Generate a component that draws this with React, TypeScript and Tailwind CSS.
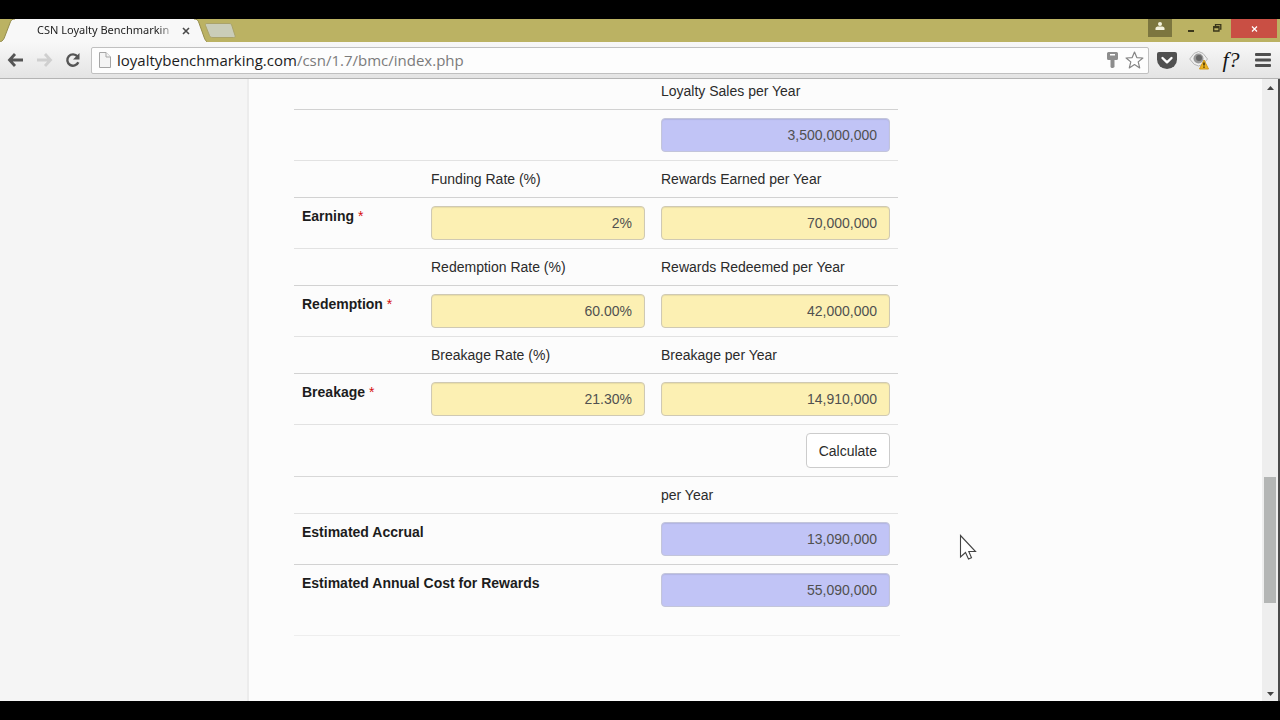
import React, { useState } from 'react';

type Tone = 'input' | 'result';

const TONE_CLS: Record<Tone, string> = {
  input: 'bg-[#fcf0b3] border-[#cfc9b4]',
  result: 'bg-[#c1c4f6] border-[#c3c5da]',
};

const RATE_ROWS = [
  { id: 'earning', label: 'Earning', rateLabel: 'Funding Rate (%)', yearLabel: 'Rewards Earned per Year', rate: '2%', year: '70,000,000' },
  { id: 'redemption', label: 'Redemption', rateLabel: 'Redemption Rate (%)', yearLabel: 'Rewards Redeemed per Year', rate: '60.00%', year: '42,000,000' },
  { id: 'breakage', label: 'Breakage', rateLabel: 'Breakage Rate (%)', yearLabel: 'Breakage per Year', rate: '21.30%', year: '14,910,000' },
];

function Field({ id, value, tone, label }: { id: string; value: string; tone: Tone; label?: string }) {
  const [text, setText] = useState(value);
  return (
    <input
      id={id}
      type="text"
      aria-label={label}
      value={text}
      readOnly={tone === 'result'}
      onChange={e => setText(e.target.value)}
      className={`block h-[34px] w-full rounded border px-3 text-right text-sm text-[#505050] shadow-[inset_0_1px_1px_rgba(0,0,0,0.08)] outline-none ${TONE_CLS[tone]}`}
    />
  );
}

function TabStrip() {
  return (
    <div className="flex h-[23px] shrink-0 items-start bg-[#bbb263]">
      <div className="relative h-[23px] w-[207px] shrink-0">
        <svg className="absolute inset-0 h-full w-full" viewBox="0 0 207 23" aria-hidden="true">
          <path d="M0 23 C3 22 4 20 5 17 L10 4 C11 1 12 0 15 0 H194 C197 0 198 1 199 4 L204 18 C205 21 206 22 207 23 Z" fill="#f8f8f8" />
          <path d="M0 23 C3 22 4 20 5 17 L10 4 C11 1 12 0 15 0 M194 0 C197 0 198 1 199 4 L204 18 C205 21 206 22 207 23" fill="none" stroke="#958d4d" />
        </svg>
        <div className="relative flex h-full items-center pl-[37px]">
          <span className="w-[138px] font-['Noto_Sans','Open_Sans',sans-serif] text-[11px] whitespace-nowrap text-[#222] [mask-image:linear-gradient(to_right,black_88%,transparent)]">
            CSN Loyalty Benchmarkin
          </span>
          <button aria-label="Close tab" className="ml-[5px] flex h-3 w-3 items-center justify-center">
            <svg width="8" height="8" viewBox="0 0 8 8" fill="none" stroke="#4a4a4a" strokeWidth="1.6">
              <path d="M1 1l6 6M7 1l-6 6" />
            </svg>
          </button>
        </div>
      </div>
      <button aria-label="New tab" className="-ml-0.5 pt-1">
        <svg width="31" height="15" viewBox="0 0 31 15">
          <path d="M2 .5 H24 C26 .5 26.5 1 27 3 L30 12.5 C30.5 14 30 14.5 28.5 14.5 H8 C6 14.5 5 14 4.5 12.5 L.5 2.5 C0 1 .5 .5 2 .5Z" fill="#cacdb9" stroke="#aaa36b" />
        </svg>
      </button>
      <div className="ml-auto flex items-start pr-[3px]">
        <button aria-label="Profile" className="flex h-[18px] w-6 justify-center bg-[#7c763f] pt-[3px]">
          <svg width="10" height="8" viewBox="0 0 10 8" fill="#f4f2df">
            <circle cx="5" cy="2" r="2" />
            <path d="M.5 8V6.500C.5 5 2 4.500 3.500 4.500h3C8 4.500 9.500 5 9.500 6.500V8z" />
          </svg>
        </button>
        <button aria-label="Minimize" className="flex h-[18px] w-8 items-center justify-center pl-1.5">
          <svg width="8" height="8" viewBox="0 0 8 8"><path d="M1 6h6v2H1z" fill="#3b371b" /></svg>
        </button>
        <button aria-label="Restore" className="flex h-[18px] w-[27px] items-center justify-center">
          <svg width="9" height="8" viewBox="0 0 9 8" fill="none" stroke="#3b371b" strokeWidth="1.3">
            <path d="M2.500 2V.7h5.300v4.500H6.500" />
            <path d="M.7 2.700h5.300v4.300H.7zM.7 3.500H6" />
          </svg>
        </button>
        <button aria-label="Close" className="flex h-[19px] w-[46px] items-center justify-center bg-[#c94f44]">
          <svg width="7" height="6" viewBox="0 0 7 6" fill="none" stroke="#fff" strokeWidth="1.200">
            <path d="M1 .5l5 5M6 .5l-5 5" />
          </svg>
        </button>
      </div>
    </div>
  );
}

function Toolbar() {
  return (
    <div className="flex h-[37px] shrink-0 items-center border-b border-[#b4b4b4] bg-linear-to-b from-[#f8f8f8] to-[#e4e4e4] pr-[9px] pl-[7px]">
      <button aria-label="Back">
        <svg width="17" height="14" viewBox="0 0 17 14" fill="none" stroke="#555" strokeWidth="2.800">
          <path d="M8 1L2.500 7L8 13M3 7H16" />
        </svg>
      </button>
      <button aria-label="Forward" className="ml-3">
        <svg width="17" height="14" viewBox="0 0 17 14" fill="none" stroke="#cfcfcf" strokeWidth="2.800">
          <path d="M9 1l5.500 6L9 13M14 7H1" />
        </svg>
      </button>
      <button aria-label="Reload" className="ml-3">
        <svg width="16" height="16" viewBox="0 0 16 16">
          <path d="M12.500 4.500A5.700 5.700 0 1 0 13.300 10.200" fill="none" stroke="#555" strokeWidth="2.400" />
          <path d="M14.500 1v6.500H8z" fill="#555" />
        </svg>
      </button>
      <div className="ml-2.5 flex h-[27px] min-w-0 flex-1 items-center rounded-xs border border-[#c0c0c0] bg-[#fdfdfd] pr-1 pl-[7px]">
        <svg width="12" height="16" viewBox="0 0 12 16" fill="#f4f4f4" stroke="#a5a5a5" className="shrink-0">
          <path d="M.5.5h6.500l4.500 4.500v10.500H.5z" />
          <path d="M7 .5V5h4.500" />
        </svg>
        <a href="#top" className="ml-1.5 font-['Open_Sans','Noto_Sans',sans-serif] text-[15px] whitespace-nowrap text-[#7b7b7b]">
          <span className="text-[#1c1c1c]">loyaltybenchmarking.com</span>/csn/1.7/bmc/index.php
        </a>
        <button aria-label="Saved passwords" className="ml-auto">
          <svg width="11" height="16" viewBox="0 0 11 16" fill="#8d8d8d">
            <path fillRule="evenodd" d="M1.500 0h8Q11 0 11 1.500v5Q11 8 9.500 8H7.500v7L6 16H4.500L3.500 15V8h-2Q0 8 0 6.500v-5Q0 0 1.500 0zM3 2v1.500h5V2z" />
          </svg>
        </button>
        <button aria-label="Bookmark this page" className="ml-[7px]">
          <svg width="19" height="18" viewBox="0 0 19 18" fill="#fff" stroke="#858585" strokeWidth="1.200" strokeLinejoin="round">
            <path d="M9.500 1l2.300 5.600 6.100.4-4.700 3.900 1.500 6-5.200-3.300-5.200 3.300 1.500-6L1.100 7l6.100-.4z" />
          </svg>
        </button>
      </div>
      <button aria-label="Save to Pocket" className="ml-2">
        <svg width="20" height="17" viewBox="0 0 20 17">
          <path d="M2 0h16q2 0 2 2v5.500A10 9.500 0 0 1 0 7.500V2Q0 0 2 0z" fill="#505050" />
          <path d="M5.500 6l4.500 4.300L14.500 6" fill="none" stroke="#fff" strokeWidth="2.400" strokeLinecap="round" strokeLinejoin="round" />
        </svg>
      </button>
      <button aria-label="Privacy warning" className="ml-3">
        <svg width="20" height="20" viewBox="0 0 20 20">
          <path d="M.7 9Q9.500 -6 18.500 9Q9.500 23 .7 9z" fill="#f0f0f0" stroke="#b5b5b5" />
          <circle cx="9.500" cy="8.500" r="5" fill="#999" />
          <circle cx="10" cy="8" r="3" fill="#666" />
          <path d="M15 10l4.500 9h-9z" fill="#eeb421" stroke="#cf981b" strokeLinejoin="round" />
          <path d="M15 12.500v3M15 16.500v1.300" stroke="#3c2c00" strokeWidth="1.500" />
        </svg>
      </button>
      <button aria-label="Font finder" className="ml-3 w-5 text-center font-['Liberation_Serif',serif] text-[22px] leading-5 text-[#161616] italic">
        f?
      </button>
      <button aria-label="Menu" className="ml-3.5">
        <svg width="16" height="14" viewBox="0 0 16 14" fill="#4e4e4e">
          <rect width="16" height="3" rx="1" />
          <rect y="5.500" width="16" height="3" rx="1" />
          <rect y="11" width="16" height="3" rx="1" />
        </svg>
      </button>
    </div>
  );
}

function Scrollbar() {
  return (
    <div className="flex w-[18px] shrink-0 flex-col items-center border-r-2 border-[#4a4a4a] bg-[#eee] pt-1.5 pb-1">
      <svg width="7" height="5" viewBox="0 0 7 5" fill="#444"><path d="M0 5L3.500 1L7 5z" /></svg>
      <div className="flex w-full flex-1 flex-col px-0.5">
        <div className="grow-[387]" />
        <div className="grow-[126] bg-[#b4b6b5]" />
        <div className="grow-[89]" />
      </div>
      <svg width="7" height="5" viewBox="0 0 7 5" fill="#444"><path d="M0 0L3.500 4L7 0z" /></svg>
    </div>
  );
}

function RewardsTable() {
  return (
    <table className="w-full max-w-[604px] table-fixed border-collapse text-left text-sm leading-5 text-[#2b2b2b] [&_td]:p-2 [&_td]:align-top [&_th]:p-2 [&_th]:align-top">
      <colgroup>
        <col className="w-[129px]" />
        <col className="w-[230px]" />
        <col />
      </colgroup>
      <tbody>
        <tr>
          <td colSpan={2} />
          <td><label htmlFor="sales">Loyalty Sales per Year</label></td>
        </tr>
        <tr className="border-t border-[#d2d2d2]">
          <td colSpan={2} />
          <td><Field id="sales" value="3,500,000,000" tone="result" /></td>
        </tr>
        {RATE_ROWS.map(row => (
          <React.Fragment key={row.id}>
            <tr className="border-t border-[#e2e2e2]">
              <td />
              <td><label htmlFor={`${row.id}-rate`}>{row.rateLabel}</label></td>
              <td><label htmlFor={`${row.id}-year`}>{row.yearLabel}</label></td>
            </tr>
            <tr className="border-t border-[#d2d2d2]">
              <th scope="row" className="font-bold text-[#1c1c1c]">
                {row.label} <span className="font-normal text-[#d60f0f]">*</span>
              </th>
              <td><Field id={`${row.id}-rate`} value={row.rate} tone="input" /></td>
              <td><Field id={`${row.id}-year`} value={row.year} tone="input" /></td>
            </tr>
          </React.Fragment>
        ))}
        <tr className="border-t border-[#e2e2e2]">
          <td colSpan={2} />
          <td>
            <button className="ml-auto block h-[35px] rounded border border-[#ccc] bg-white px-3">Calculate</button>
          </td>
        </tr>
        <tr className="border-t border-[#d8d8d8]">
          <td colSpan={2} />
          <td>per Year</td>
        </tr>
        <tr className="border-t border-[#e2e2e2]">
          <th scope="row" colSpan={2} className="font-bold text-[#1c1c1c]">Estimated Accrual</th>
          <td><Field id="accrual" value="13,090,000" tone="result" label="Estimated Accrual per Year" /></td>
        </tr>
        <tr className="border-t border-[#d2d2d2]">
          <th scope="row" colSpan={2} className="font-bold text-[#1c1c1c]">Estimated Annual Cost for Rewards</th>
          <td><Field id="cost" value="55,090,000" tone="result" label="Estimated Annual Cost for Rewards per Year" /></td>
        </tr>
      </tbody>
    </table>
  );
}

export default function App() {
  return (
    <div className="relative flex h-screen flex-col overflow-hidden border-y-[19px] border-black bg-[#fcfcfc] font-['Liberation_Sans',Arial,sans-serif]">
      <TabStrip />
      <Toolbar />
      <div className="flex min-h-0 flex-1">
        <aside className="w-[249px] shrink-0 border-r-2 border-[#ececec] bg-[#f5f5f5]" />
        {/* scrolled part way down, so the first row is tucked under the toolbar */}
        <main className="flex min-w-0 flex-1 flex-col overflow-hidden pl-[45px]">
          <div className="-mt-1.5">
            <RewardsTable />
            <hr className="mt-5 max-w-[606px] border-[#eee]" />
          </div>
        </main>
        <Scrollbar />
      </div>
      <svg className="absolute top-[515px] left-[959px]" width="18" height="27" viewBox="0 0 18 27" fill="#fff" stroke="#444" strokeWidth="1.100" aria-hidden="true">
        <path d="M1.500 1.500V23L6.500 18.500L9.500 25L12.500 23.700L9.800 17.500H16.500z" />
      </svg>
    </div>
  );
}
